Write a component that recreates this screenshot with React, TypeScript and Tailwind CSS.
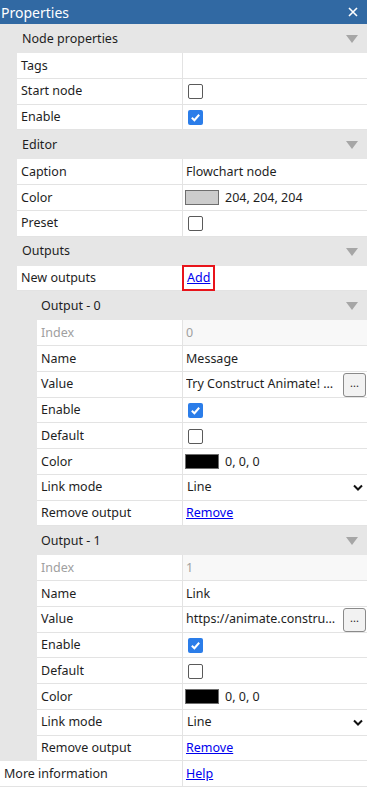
import type { ReactNode } from 'react'

const font = { fontFamily: '"Segoe UI", "Noto Sans", "Open Sans", sans-serif' }

function Triangle() {
  return (
    <svg width="12" height="8" viewBox="0 0 12 8" className="mr-[9px]">
      <path d="M0 0 H12 L6 8 Z" fill="#a6a6a6" />
    </svg>
  )
}

function Header({ title, indent }: { title: string; indent: string }) {
  return (
    <div className={`flex h-[29px] items-center justify-between bg-[#e6e6e6] pt-px ${indent}`}>
      <span className="text-[12.5px] text-[#1e1e1e]">{title}</span>
      <Triangle />
    </div>
  )
}

function Row({ label, children, disabled, first }: { label: string; children?: ReactNode; disabled?: boolean; first?: number }) {
  return (
    <div className="flex h-[25.75px] border-b border-[#e3e3e3] bg-white">
      <div
        className={`flex items-center border-r border-[#e3e3e3] pl-1 pt-px text-[12.5px] ${disabled ? 'text-[#a0a0a0]' : 'text-[#1e1e1e]'}`}
        style={{ width: first }}
      >
        {label}
      </div>
      <div className={`flex min-w-0 flex-1 items-center pt-px text-[12.5px] ${disabled ? 'bg-[#f8f8f8] text-[#a0a0a0]' : 'text-[#1e1e1e]'}`}>
        {children}
      </div>
    </div>
  )
}

function Check({ on }: { on?: boolean }) {
  return on ? (
    <span className="ml-[5px] flex h-[15px] w-[15px] items-center justify-center rounded-[2px] bg-[#2b7de9]">
      <svg width="11" height="11" viewBox="0 0 12 12">
        <path d="M2 6.3 L4.8 9 L10 3" fill="none" stroke="#fff" strokeWidth="2.2" />
      </svg>
    </span>
  ) : (
    <span className="ml-[5px] h-[15px] w-[15px] rounded-[2px] border border-[#5a5a5a] bg-white" />
  )
}

function Swatch({ color, text }: { color: string; text: string }) {
  return (
    <div className="flex items-center">
      <span className={`ml-[2px] h-[15px] w-[34px] border border-[#6e6e6e] ${color}`} />
      <span className="ml-[6px]">{text}</span>
    </div>
  )
}

function Link({ text }: { text: string }) {
  return <span className="ml-[3px] text-[#0000ee] underline">{text}</span>
}

function ValueWithButton({ text }: { text: string }) {
  return (
    <div className="flex w-full items-center">
      <span className="ml-[3px] min-w-0 flex-1 truncate">{text}</span>
      <span className="mr-[1px] ml-[2px] flex h-[24px] w-[23px] shrink-0 items-center justify-center rounded-[3px] border border-[#8a8a8a] bg-[#f2f2f2] pb-[4px] text-[11px] leading-none">
        ...
      </span>
    </div>
  )
}

function Select() {
  return (
    <div className="flex w-full items-center justify-between">
      <span className="ml-[4px]">Line</span>
      <svg width="10" height="7" viewBox="0 0 10 7" className="mr-[4px]">
        <path d="M1 1.5 L5 5.5 L9 1.5" fill="none" stroke="#111" strokeWidth="2" />
      </svg>
    </div>
  )
}

function Output({ n, name, value }: { n: number; name: string; value: string }) {
  return (
    <div className="bg-[#e6e6e6] pl-[20px]">
      <Header title={`Output - ${n}`} indent="pl-[4px]" />
      <Row label="Index" disabled first={146}>
        <span className="ml-[3px]">{n}</span>
      </Row>
      <Row label="Name" first={146}>
        <span className="ml-[3px]">{name}</span>
      </Row>
      <Row label="Value" first={146}>
        <ValueWithButton text={value} />
      </Row>
      <Row label="Enable" first={146}>
        <Check on />
      </Row>
      <Row label="Default" first={146}>
        <Check />
      </Row>
      <Row label="Color" first={146}>
        <Swatch color="bg-black" text="0, 0, 0" />
      </Row>
      <Row label="Link mode" first={146}>
        <Select />
      </Row>
      <Row label="Remove output" first={146}>
        <Link text="Remove" />
      </Row>
    </div>
  )
}

export default function App() {
  return (
    <div className="h-[802px] w-[367px] overflow-hidden bg-white" style={font}>
      <div className="flex h-[24px] items-center justify-between bg-[#3169a3] pl-px text-[14px] text-white">
        <span>Properties</span>
        <svg width="10" height="10" viewBox="0 0 10 10" className="mr-[9px]">
          <path d="M1 1 L9 9 M9 1 L1 9" stroke="#fff" strokeWidth="1.6" />
        </svg>
      </div>

      <div className="bg-[#e6e6e6]">
        <Header title="Node properties" indent="pl-[22px]" />
        <div className="pl-[17px]">
          <Row label="Tags" first={166} />
          <Row label="Start node" first={166}>
            <Check />
          </Row>
          <Row label="Enable" first={166}>
            <Check on />
          </Row>
        </div>

        <Header title="Editor" indent="pl-[22px]" />
        <div className="pl-[17px]">
          <Row label="Caption" first={166}>
            <span className="ml-[3px]">Flowchart node</span>
          </Row>
          <Row label="Color" first={166}>
            <Swatch color="bg-[#cccccc]" text="204, 204, 204" />
          </Row>
          <Row label="Preset" first={166}>
            <Check />
          </Row>
        </div>

        <Header title="Outputs" indent="pl-[22px]" />
        <div className="pl-[17px]">
          <Row label="New outputs" first={166}>
            <span className="-ml-px flex h-[26px] items-center border-2 border-[#e8141b] px-[3px]">
              <span className="text-[#0000ee] underline">Add</span>
            </span>
          </Row>
          <Output n={0} name="Message" value="Try Construct Animate! Use it to make animations" />
          <Output n={1} name="Link" value="https://animate.construct.net" />
        </div>
      </div>

      <Row label="More information" first={183}>
        <Link text="Help" />
      </Row>
    </div>
  )
}
